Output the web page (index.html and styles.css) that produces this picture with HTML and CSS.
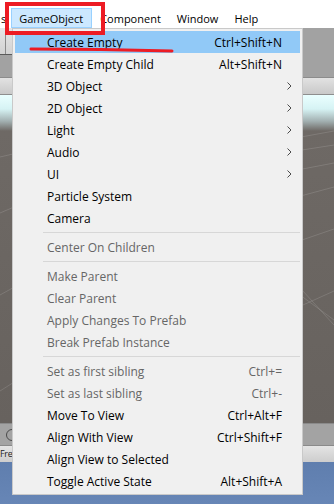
FILE: index.html
```html
<html>
    <head>
        <link rel="stylesheet" href="styles.css">
    </head>
    <body>
        <div class="menubar">
            <span class="menuTitle cut">s</span>
            <span class="menuTitle open">GameObject</span>
            <span class="menuTitle">Component</span>
            <span class="menuTitle">Window</span>
            <span class="menuTitle">Help</span>
        </div>
        <div class="toolbar">
            <div class="toolGroup">
                <span class="toolButton"></span>
                <span class="toolButton"></span>
            </div>
        </div>
        <div class="tabStrip"></div>
        <div class="sceneView">
            <svg class="grid" viewBox="0 0 334 328" preserveAspectRatio="none">
                <path d="M0 62 L60 48 M0 118 L70 88 M0 200 L90 150 M0 296 L120 220 M290 44 L334 36 M270 60 L334 50 M250 84 L334 68 M230 120 L334 92 M200 180 L334 134 M170 270 L334 196 M270 160 L334 230 M300 200 L334 225"></path>
            </svg>
        </div>
        <div class="sceneBar"><span class="searchEnd"></span></div>
        <div class="gameTabs"><span class="aspect">Fre</span></div>
        <div class="gameView"></div>

        <div class="dropdown">
            <div class="item active"><span>Create Empty</span><span class="key">Ctrl+Shift+N</span></div>
            <div class="item"><span>Create Empty Child</span><span class="key">Alt+Shift+N</span></div>
            <div class="item"><span>3D Object</span><svg class="arrow" width="5" height="8"><path d="M0.5 0.5 L4 4 L0.5 7.5"></path></svg></div>
            <div class="item"><span>2D Object</span><svg class="arrow" width="5" height="8"><path d="M0.5 0.5 L4 4 L0.5 7.5"></path></svg></div>
            <div class="item"><span>Light</span><svg class="arrow" width="5" height="8"><path d="M0.5 0.5 L4 4 L0.5 7.5"></path></svg></div>
            <div class="item"><span>Audio</span><svg class="arrow" width="5" height="8"><path d="M0.5 0.5 L4 4 L0.5 7.5"></path></svg></div>
            <div class="item"><span>UI</span><svg class="arrow" width="5" height="8"><path d="M0.5 0.5 L4 4 L0.5 7.5"></path></svg></div>
            <div class="item"><span>Particle System</span></div>
            <div class="item"><span>Camera</span></div>
            <div class="sep"></div>
            <div class="item disabled"><span>Center On Children</span></div>
            <div class="sep"></div>
            <div class="item disabled"><span>Make Parent</span></div>
            <div class="item disabled"><span>Clear Parent</span></div>
            <div class="item disabled"><span>Apply Changes To Prefab</span></div>
            <div class="item disabled"><span>Break Prefab Instance</span></div>
            <div class="sep"></div>
            <div class="item disabled"><span>Set as first sibling</span><span class="key">Ctrl+=</span></div>
            <div class="item disabled"><span>Set as last sibling</span><span class="key">Ctrl+-</span></div>
            <div class="item"><span>Move To View</span><span class="key">Ctrl+Alt+F</span></div>
            <div class="item"><span>Align With View</span><span class="key">Ctrl+Shift+F</span></div>
            <div class="item"><span>Align View to Selected</span></div>
            <div class="item"><span>Toggle Active State</span><span class="key">Alt+Shift+A</span></div>
        </div>

        <!-- annotation marks -->
        <div class="markBox"></div>
        <svg class="markLine" width="334" height="60">
            <path d="M31 49 L101 49.5 L172 51"></path>
        </svg>
    </body>
</html>
```

FILE: styles.css
```css
body {
    width: 334px;
    height: 504px;
    margin: 0;
    padding: 0;
    overflow: hidden;
    position: relative;
    font-family: "Open Sans", "Noto Sans", sans-serif;
    font-size: 12px;
    color: #000;
    background-color: #67625e;
}
.menubar {
    height: 28px;
    box-sizing: border-box;
    padding-top: 8px;
    display: flex;
    align-items: stretch;
    background-color: #fff;
    font-size: 11px;
}
.menuTitle {
    display: flex;
    align-items: center;
    padding: 0 7px;
    border: 1px solid transparent;
}
.menuTitle.cut {
    padding: 0 4px 0 0;
}
.menuTitle.open {
    padding: 0 8px 0 7px;
    background-color: #cce8ff;
    border-color: #99d1ff;
}
.toolbar {
    height: 50px;
    box-sizing: border-box;
    background-color: #a2a2a2;
    border-bottom: 1px solid #8c8c8c;
}
.toolGroup {
    display: flex;
    width: 60px;
    height: 27px;
    box-sizing: border-box;
    border-bottom: 1px solid #5a5a5a;
}
.toolButton {
    flex: 1;
    background: linear-gradient(#e6e6e6, #d2d2d2);
    border-left: 1px solid #8a8a8a;
}
.toolButton:first-child {
    flex: 0 0 5px;
    border-left: none;
}
.tabStrip {
    height: 17px;
    box-sizing: border-box;
    background: linear-gradient(#e2e2e2, #c9c9c9);
    border-bottom: 1px solid #8e8e8e;
}
.sceneView {
    height: 328px;
    background: linear-gradient(#eaffff 0px, #d6f3f4 14px, #a3b1b2 26px, #6e6965 36px, #67625e 100%);
}
.grid {
    width: 100%;
    height: 100%;
    display: block;
}
.grid path {
    stroke: rgba(255, 255, 255, 0.13);
    stroke-width: 1;
    fill: none;
}
.sceneBar {
    height: 22px;
    box-sizing: border-box;
    background-color: #a3a3a3;
    border-top: 1px solid #8a8a8a;
    display: flex;
    align-items: center;
    padding-left: 6px;
}
.searchEnd {
    width: 10px;
    height: 10px;
    border: 1px solid #4a4a4a;
    border-radius: 50%;
}
.gameTabs {
    height: 17px;
    box-sizing: border-box;
    background: linear-gradient(#e4e4e4, #cdcdcd);
    border-top: 1px solid #8a8a8a;
    font-size: 9px;
    line-height: 15px;
    color: #222;
}
.aspect {
    letter-spacing: -0.3px;
}
.gameView {
    height: 42px;
    background: linear-gradient(#5f7eae, #6786b6);
}
.dropdown {
    position: absolute;
    left: 12px;
    top: 28px;
    width: 291px;
    box-sizing: border-box;
    padding: 2px;
    background-color: #f0f0f0;
    border: 1px solid #c9c9c9;
}
.item {
    height: 22px;
    display: flex;
    align-items: center;
    padding: 0 8px 0 32px;
    white-space: nowrap;
}
.item.active {
    background-color: #91c9f7;
}
.item.disabled {
    color: #666;
}
.key {
    margin-left: auto;
    margin-right: 10px;
}
.arrow {
    margin-left: auto;
}
.arrow path {
    stroke: #4a4a4a;
    fill: none;
}
.sep {
    height: 7px;
    margin-left: 28px;
    background: linear-gradient(transparent 3px, #d7d7d7 3px, #d7d7d7 4px, transparent 4px);
}
.markBox {
    position: absolute;
    left: 5px;
    top: 2px;
    width: 100px;
    height: 33px;
    box-sizing: border-box;
    border: 4px solid #ed1c24;
}
.markLine {
    position: absolute;
    left: 0;
    top: 0;
}
.markLine path {
    stroke: #ed1c24;
    stroke-width: 3;
    stroke-linecap: round;
    fill: none;
}
```
